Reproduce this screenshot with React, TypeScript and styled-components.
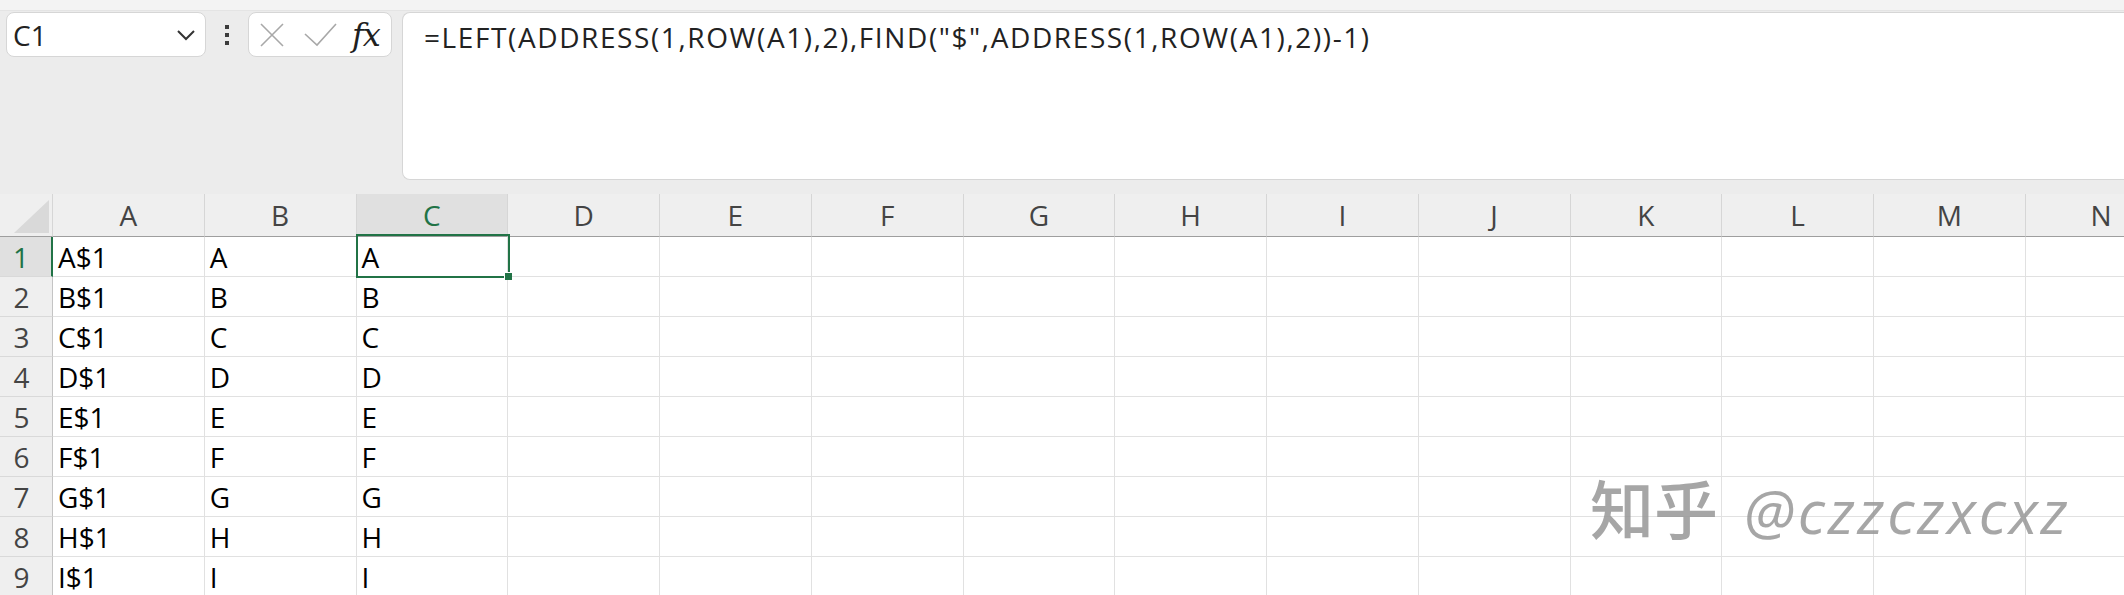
import React from 'react';
import styled, { createGlobalStyle } from 'styled-components';

const GlobalStyle = createGlobalStyle`
  html, body {
    margin: 0;
    padding: 0;
    background: #ececec;
  }
`;

const COLUMNS = ['A', 'B', 'C', 'D', 'E', 'F', 'G', 'H', 'I', 'J', 'K', 'L', 'M', 'N'];
const ROWS = ['A', 'B', 'C', 'D', 'E', 'F', 'G', 'H', 'I'];
const ACTIVE_COL = 'C';
const ACTIVE_ROW = 1;
const GREEN = '#217346';

const Page = styled.div`
  width: 2124px;
  height: 595px;
  overflow: hidden;
  position: relative;
  background: #ececec;
  font-family: "Open Sans", "Noto Sans", sans-serif;
`;

const TopStrip = styled.div`
  height: 10px;
  background: #f3f3f3;
  border-bottom: 1px solid #e4e4e4;
`;

const FormulaBar = styled.div`
  display: flex;
  align-items: flex-start;
  box-sizing: border-box;
  height: 183px;
  padding: 1px 0 0 6px;
`;

const NameBox = styled.div`
  box-sizing: border-box;
  width: 200px;
  height: 45px;
  display: flex;
  align-items: center;
  justify-content: space-between;
  padding: 0 9px 0 6px;
  background: #fff;
  border: 1px solid #d6d6d6;
  border-radius: 8px;
  font-size: 28px;
  color: #222;
`;

const MoreButton = styled.div`
  width: 42px;
  height: 45px;
  display: flex;
  align-items: center;
  justify-content: center;
`;

const FuncBox = styled.div`
  box-sizing: border-box;
  width: 144px;
  height: 45px;
  display: flex;
  align-items: center;
  padding-left: 11px;
  background: #fff;
  border: 1px solid #d6d6d6;
  border-radius: 8px;
`;

const IconSlot = styled.span<{ $gap: number }>`
  display: flex;
  margin-left: ${({ $gap }) => $gap}px;
`;

const FxLabel = styled.span`
  margin-left: 15px;
  font-family: "DejaVu Serif", "Liberation Serif", serif;
  font-style: italic;
  font-size: 32px;
  line-height: 1;
  color: #1f1f1f;
  letter-spacing: -1px;
`;

const FormulaField = styled.div`
  box-sizing: border-box;
  flex: 1;
  height: 168px;
  margin-left: 10px;
  padding: 5px 0 0 21px;
  background: #fff;
  border: 1px solid #d6d6d6;
  border-right: none;
  border-radius: 8px 0 0 8px;
  font-size: 28px;
  line-height: 38px;
  letter-spacing: 1.6px;
  color: #222;
  white-space: nowrap;
`;

const Sheet = styled.div`
  display: grid;
  grid-template-columns: 53px repeat(14, 151.75px);
  grid-template-rows: 43px repeat(9, 40px);
`;

const Corner = styled.div`
  box-sizing: border-box;
  display: flex;
  align-items: flex-end;
  justify-content: flex-end;
  padding: 0 3px 3px 0;
  background: #efefef;
  border-right: 1px solid #d6d6d6;
  border-bottom: 1px solid #9e9e9e;
`;

const ColHeader = styled.div<{ $active?: boolean }>`
  box-sizing: border-box;
  display: flex;
  align-items: center;
  justify-content: center;
  background: ${({ $active }) => ($active ? '#e0e0e0' : '#efefef')};
  border-right: 1px solid #d6d6d6;
  border-bottom: 1px solid #9e9e9e;
  font-size: 28px;
  color: ${({ $active }) => ($active ? GREEN : '#444')};
`;

const RowHeader = styled.div<{ $active?: boolean }>`
  box-sizing: border-box;
  display: flex;
  align-items: center;
  justify-content: center;
  padding-right: 9px;
  background: ${({ $active }) => ($active ? '#e0e0e0' : '#efefef')};
  border-right: ${({ $active }) => ($active ? `2px solid ${GREEN}` : '1px solid #c4c4c4')};
  border-bottom: 1px solid #d9d9d9;
  font-size: 28px;
  color: ${({ $active }) => ($active ? GREEN : '#444')};
`;

const Cell = styled.div`
  box-sizing: border-box;
  position: relative;
  display: flex;
  align-items: center;
  padding-left: 5px;
  background: #fff;
  border-right: 1px solid #e1e1e1;
  border-bottom: 1px solid #e1e1e1;
  font-size: 28px;
  color: #000;
  white-space: nowrap;
`;

const Selection = styled.div`
  position: absolute;
  top: -3px;
  left: -1px;
  right: -3px;
  bottom: -2px;
  border: 2px solid ${GREEN};
  z-index: 2;
  pointer-events: none;
`;

const FillHandle = styled.div`
  position: absolute;
  right: -4px;
  bottom: -4px;
  width: 7px;
  height: 7px;
  background: ${GREEN};
  border: 1px solid #fff;
  border-width: 1px 0 0 1px;
`;

const Watermark = styled.div`
  position: absolute;
  left: 1590px;
  top: 474px;
  display: flex;
  align-items: baseline;
  gap: 26px;
  color: rgba(150, 150, 150, 0.85);
  z-index: 3;
  pointer-events: none;
`;

const Brand = styled.span`
  font-family: "Noto Sans CJK SC", "Noto Sans", sans-serif;
  font-weight: 500;
  font-size: 64px;
  line-height: 1;
`;

const Handle = styled.span`
  font-family: "Open Sans", "Noto Sans", sans-serif;
  font-style: italic;
  font-size: 60px;
  line-height: 1;
  letter-spacing: 3px;
`;

const Chevron = () => (
  <svg width="20" height="12" viewBox="0 0 20 12">
    <polyline points="2,2 10,10 18,2" fill="none" stroke="#333" strokeWidth="2" />
  </svg>
);

const Dots = () => (
  <svg width="6" height="22" viewBox="0 0 6 22">
    <rect x="1" y="1" width="4" height="4" fill="#3c3c3c" />
    <rect x="1" y="9" width="4" height="4" fill="#3c3c3c" />
    <rect x="1" y="17" width="4" height="4" fill="#3c3c3c" />
  </svg>
);

const CancelIcon = () => (
  <svg width="24" height="24" viewBox="0 0 24 24">
    <path d="M1 1 L23 23 M23 1 L1 23" stroke="#a8a8a8" strokeWidth="1.6" fill="none" />
  </svg>
);

const CheckIcon = () => (
  <svg width="33" height="24" viewBox="0 0 33 24">
    <polyline points="1,11 13,22 32,1" fill="none" stroke="#a8a8a8" strokeWidth="1.6" />
  </svg>
);

const CornerTriangle = () => (
  <svg width="35" height="33" viewBox="0 0 35 33">
    <polygon points="35,0 35,33 0,33" fill="#d9d9d9" />
  </svg>
);

const App: React.FC = () => {
  const formula = '=LEFT(ADDRESS(1,ROW(A1),2),FIND("$",ADDRESS(1,ROW(A1),2))-1)';

  return (
    <Page>
      <GlobalStyle />
      <TopStrip />
      <FormulaBar>
        <NameBox>
          <span>C1</span>
          <Chevron />
        </NameBox>
        <MoreButton>
          <Dots />
        </MoreButton>
        <FuncBox>
          <CancelIcon />
          <IconSlot $gap={20}>
            <CheckIcon />
          </IconSlot>
          <FxLabel>fx</FxLabel>
        </FuncBox>
        <FormulaField>{formula}</FormulaField>
      </FormulaBar>

      <Sheet>
        <Corner>
          <CornerTriangle />
        </Corner>
        {COLUMNS.map((col) => (
          <ColHeader key={col} $active={col === ACTIVE_COL}>
            {col}
          </ColHeader>
        ))}

        {ROWS.map((letter, i) => {
          const row = i + 1;
          return (
            <React.Fragment key={letter}>
              <RowHeader $active={row === ACTIVE_ROW}>{row}</RowHeader>
              {COLUMNS.map((col) => {
                let value = '';
                if (col === 'A') value = `${letter}$1`;
                if (col === 'B' || col === 'C') value = letter;
                const selected = col === ACTIVE_COL && row === ACTIVE_ROW;
                return (
                  <Cell key={col}>
                    {value}
                    {selected && (
                      <Selection>
                        <FillHandle />
                      </Selection>
                    )}
                  </Cell>
                );
              })}
            </React.Fragment>
          );
        })}
      </Sheet>

      <Watermark>
        <Brand>知乎</Brand>
        <Handle>@czzczxcxz</Handle>
      </Watermark>
    </Page>
  );
};

export default App;
